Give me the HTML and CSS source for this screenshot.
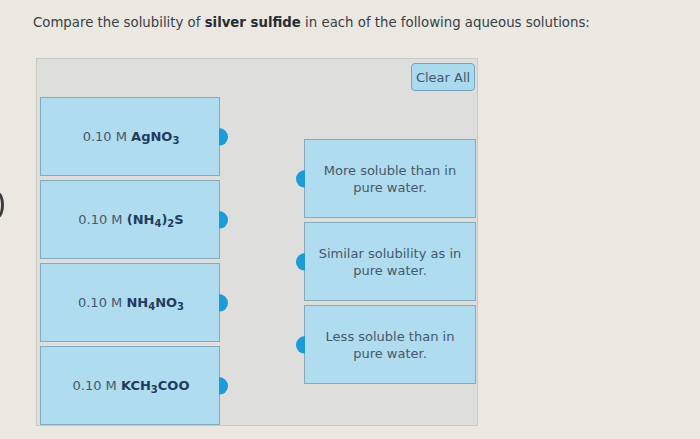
FILE: index.html
```html
<!DOCTYPE html>
<html lang="en">
<head>
<meta charset="utf-8">
<title>Solubility of silver sulfide</title>
<link rel="stylesheet" href="styles.css">
</head>
<body>
<div class="bezel"></div>
<p class="prompt">Compare the solubility of <b>silver sulfide</b> in each of the following aqueous solutions:</p>

<div class="board">
  <div class="toolbar">
    <button class="clear-btn">Clear All</button>
  </div>
  <div class="columns">
    <div class="col col-left">
      <div class="tile source"><span>0.10 M <b>AgNO<sub>3</sub></b></span><i class="knob knob-right"></i></div>
      <div class="tile source"><span>0.10 M <b>(NH<sub>4</sub>)<sub>2</sub>S</b></span><i class="knob knob-right"></i></div>
      <div class="tile source"><span>0.10 M <b>NH<sub>4</sub>NO<sub>3</sub></b></span><i class="knob knob-right"></i></div>
      <div class="tile source"><span>0.10 M <b>KCH<sub>3</sub>COO</b></span><i class="knob knob-right"></i></div>
    </div>
    <div class="col col-right">
      <div class="tile target"><i class="knob knob-left"></i><span>More soluble than in<br>pure water.</span></div>
      <div class="tile target"><i class="knob knob-left"></i><span>Similar solubility as in<br>pure water.</span></div>
      <div class="tile target"><i class="knob knob-left"></i><span>Less soluble than in<br>pure water.</span></div>
    </div>
  </div>
</div>
</body>
</html>
```

FILE: styles.css
```css
* { box-sizing: border-box; }

html, body {
  margin: 0;
  height: 100%;
}

body {
  background: #ebe8e1;
  font-family: "DejaVu Sans", Verdana, sans-serif;
  color: #3e4d59;
  position: relative;
  overflow: hidden;
  padding: 14px 0 0 33px;
}

/* dark screen edge at the far left */
.bezel {
  position: absolute;
  left: -8px;
  top: 192px;
  width: 12px;
  height: 26px;
  border: 3px solid #3a3a3a;
  border-radius: 50%;
}

.prompt {
  margin: 0;
  font-size: 13.3px;
  line-height: 17px;
  color: #363f47;
}

.prompt b { color: #262c32; }

.board {
  margin: 27px 0 0 3px;
  width: 442px;
  height: 368px;
  background: #dededc;
  border: 1px solid #c9c9c6;
  display: flex;
  flex-direction: column;
}

.toolbar {
  display: flex;
  justify-content: flex-end;
  padding: 4px 2px 0 0;
}

.clear-btn {
  font-family: "DejaVu Sans", Verdana, sans-serif;
  font-size: 13px;
  color: #3f5868;
  background: #abdaee;
  border: 1px solid #76a6bd;
  border-radius: 4px;
  width: 64px;
  height: 28px;
  padding: 0;
}

.columns {
  display: flex;
  justify-content: space-between;
  padding: 6px 1px 0 3px;
}

.col {
  display: flex;
  flex-direction: column;
  gap: 4px;
}

.col-left { width: 180px; }

.col-right {
  width: 172px;
  padding-top: 42px;
}

.tile {
  position: relative;
  height: 79px;
  background: #b0dcef;
  border: 1px solid #86aabb;
  display: flex;
  align-items: center;
  justify-content: center;
  text-align: center;
  font-size: 13px;
  line-height: 17px;
  color: #45596a;
}

.tile b {
  color: #1f3c5e;
  font-weight: bold;
}

.tile sub {
  font-size: 10px;
  vertical-align: -3px;
  line-height: 0;
}

.source span { padding-left: 2px; }

.knob {
  position: absolute;
  top: 50%;
  width: 18px;
  height: 18px;
  margin-top: -9px;
  background: #1c9bd7;
  border-radius: 50%;
}

.knob-right {
  right: -9px;
  clip-path: inset(0 0 0 50%);
}

.knob-left {
  left: -9px;
  clip-path: inset(0 50% 0 0);
}
```
